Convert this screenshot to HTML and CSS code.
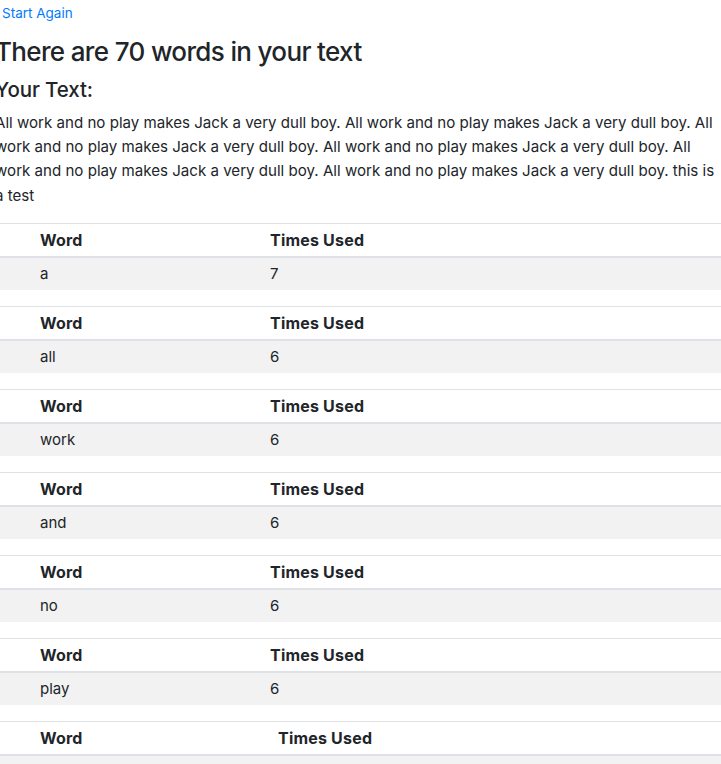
FILE: index.html
```html
<!DOCTYPE html>
<html lang="en">
<head>
<meta charset="utf-8">
<title>Word Counter</title>
<link rel="stylesheet" href="styles.css">
</head>
<body>
<div class="page">
  <a class="restart" href="#">Start Again</a>
  <h2 class="total">There are 70 words in your text</h2>
  <h4 class="label">Your Text:</h4>
  <p class="source">All work and no play makes Jack a very dull boy. All work and no play makes Jack a very dull boy. All work and no play makes Jack a very dull boy. All work and no play makes Jack a very dull boy. All work and no play makes Jack a very dull boy. All work and no play makes Jack a very dull boy. this is a test</p>

  <table class="count">
    <thead><tr><th class="col-word">Word</th><th>Times Used</th></tr></thead>
    <tbody><tr><td class="col-word">a</td><td>7</td></tr></tbody>
  </table>
  <table class="count">
    <thead><tr><th class="col-word">Word</th><th>Times Used</th></tr></thead>
    <tbody><tr><td class="col-word">all</td><td>6</td></tr></tbody>
  </table>
  <table class="count">
    <thead><tr><th class="col-word">Word</th><th>Times Used</th></tr></thead>
    <tbody><tr><td class="col-word">work</td><td>6</td></tr></tbody>
  </table>
  <table class="count">
    <thead><tr><th class="col-word">Word</th><th>Times Used</th></tr></thead>
    <tbody><tr><td class="col-word">and</td><td>6</td></tr></tbody>
  </table>
  <table class="count">
    <thead><tr><th class="col-word">Word</th><th>Times Used</th></tr></thead>
    <tbody><tr><td class="col-word">no</td><td>6</td></tr></tbody>
  </table>
  <table class="count">
    <thead><tr><th class="col-word">Word</th><th>Times Used</th></tr></thead>
    <tbody><tr><td class="col-word">play</td><td>6</td></tr></tbody>
  </table>
  <table class="count count-wide">
    <thead><tr><th class="col-word">Word</th><th>Times Used</th></tr></thead>
    <tbody><tr><td class="col-word">makes</td><td>6</td></tr></tbody>
  </table>
</div>
</body>
</html>
```

FILE: styles.css
```css
html, body {
  margin: 0;
  padding: 0;
  background: #fff;
  overflow: hidden;
}

body {
  font-family: Inter, "Noto Sans", sans-serif;
  font-size: 16px;
  line-height: 1.5;
  color: #212529;
}

/* the page is scrolled slightly sideways, so its left edge sits off-screen */
.page {
  margin-left: -5px;
  width: 726px;
}

.restart {
  display: inline-block;
  margin-left: 7px;
  font-size: 13.5px;
  line-height: 20px;
  color: #007bff;
  text-decoration: none;
}

.total {
  margin: 12px 0 0;
  font-size: 26px;
  font-weight: 500;
  line-height: 1.2;
  letter-spacing: -0.65px;
}

.label {
  margin: 11px 0 0;
  font-size: 20.5px;
  font-weight: 500;
  line-height: 1.2;
  letter-spacing: -0.1px;
}

.source {
  margin: 8px 0 15px;
  font-size: 15.1px;
  line-height: 24.3px;
}

.count {
  width: 100%;
  margin-bottom: 16px;
  border-collapse: collapse;
  table-layout: fixed;
}

.count th,
.count td {
  padding: 4px;
  text-align: left;
  vertical-align: top;
  line-height: 24px;
  border-top: 1px solid #dee2e6;
}

.count th {
  font-weight: 700;
  border-bottom: 2px solid #dee2e6;
  letter-spacing: 0.2px;
}

.count td {
  font-size: 15px;
  background: #f2f2f2;
  border-top: 0;
}

.count .col-word {
  width: 222px;
  padding-left: 45px;
}

.count-wide .col-word {
  width: 230px;
}
```
